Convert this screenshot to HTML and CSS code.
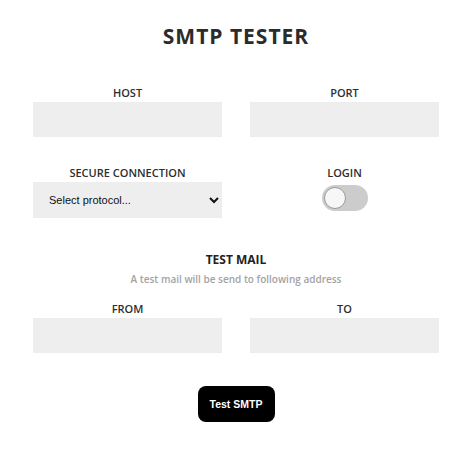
FILE: index.html
```html
<!DOCTYPE html>
<html>
<head>
<meta charset="utf-8">
<link rel="stylesheet" href="styles.css">
</head>
<body>
<div class="page">
  <h1 class="title">SMTP TESTER</h1>
  <div class="row row-first">
    <div class="field">
      <label class="label">HOST</label>
      <input class="input" type="text">
    </div>
    <div class="field">
      <label class="label">PORT</label>
      <input class="input" type="text">
    </div>
  </div>
  <div class="row row-second">
    <div class="field">
      <label class="label">SECURE CONNECTION</label>
      <select class="select">
        <option>Select protocol...</option>
      </select>
    </div>
    <div class="field">
      <label class="label">LOGIN</label>
      <div class="toggle"><div class="knob"></div></div>
    </div>
  </div>
  <div class="section">
    <div class="section-title">TEST MAIL</div>
    <div class="section-sub">A test mail will be send to following address</div>
  </div>
  <div class="row row-third">
    <div class="field">
      <label class="label">FROM</label>
      <input class="input" type="text">
    </div>
    <div class="field">
      <label class="label">TO</label>
      <input class="input" type="text">
    </div>
  </div>
  <div class="actions">
    <button class="btn">Test SMTP</button>
  </div>
</div>
</body>
</html>
```

FILE: styles.css
```css
html, body {
  margin: 0;
  padding: 0;
  background: #ffffff;
}
.page {
  width: 406px;
  margin-left: 33px;
  padding-top: 22px;
  font-family: "Open Sans", "Liberation Sans", sans-serif;
}
.title {
  margin: 0;
  text-align: center;
  font-family: "Open Sans", sans-serif;
  font-weight: 700;
  font-size: 21px;
  line-height: 28px;
  letter-spacing: 1px;
  color: #2b2b2b;
}
.row {
  display: grid;
  grid-template-columns: 189px 189px;
  column-gap: 28px;
}
.row-first { margin-top: 35px; }
.row-second { margin-top: 28px; }
.row-third { margin-top: 15px; }
.field {
  display: flex;
  flex-direction: column;
  align-items: center;
}
.label {
  display: block;
  font-size: 11px;
  line-height: 15px;
  font-weight: 600;
  color: #2e2e2e;
  margin-bottom: 2px;
}
.input {
  width: 100%;
  height: 35px;
  box-sizing: border-box;
  border: none;
  background: #eeeeee;
  margin: 0;
  padding: 0 12px;
}
.select {
  width: 100%;
  height: 36px;
  box-sizing: border-box;
  border: none;
  background-color: #eeeeee;
  margin: 0;
  padding: 0 8px 0 12px;
  font-family: "Liberation Sans", Arial, sans-serif;
  font-size: 11px;
  color: #111;
}
.toggle {
  margin-top: 3px;
  width: 46px;
  height: 26px;
  border-radius: 13px;
  background: #cccccc;
  box-sizing: border-box;
  padding: 2px;
  display: flex;
}
.knob {
  width: 22px;
  height: 22px;
  border-radius: 50%;
  background: #f7f7f7;
  box-sizing: border-box;
  border: 1px solid #9a9a9a;
}
.section {
  margin-top: 34px;
  text-align: center;
}
.section-title {
  font-size: 12px;
  line-height: 16px;
  font-weight: 700;
  color: #222222;
}
.section-sub {
  margin-top: 4px;
  font-size: 10px;
  line-height: 14px;
  font-weight: 600;
  color: #a3a3a3;
}
.actions {
  margin-top: 33px;
  display: flex;
  justify-content: center;
}
.btn {
  width: 77px;
  height: 36px;
  border: none;
  border-radius: 8px;
  background: #000000;
  color: #ffffff;
  font-family: "Liberation Sans", Arial, sans-serif;
  font-weight: 700;
  font-size: 10.5px;
  padding: 0;
}
```
